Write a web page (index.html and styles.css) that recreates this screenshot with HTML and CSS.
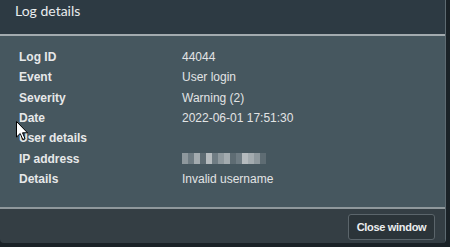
FILE: index.html
```html
<!DOCTYPE html>
<html>
<head>
<meta charset="utf-8">
<link rel="stylesheet" href="styles.css">
</head>
<body>
<div class="modal">
  <div class="modal-header">Log details</div>
  <div class="modal-body">
    <div class="row"><span class="label">Log ID</span><span class="value">44044</span></div>
    <div class="row"><span class="label">Event</span><span class="value">User login</span></div>
    <div class="row"><span class="label">Severity</span><span class="value">Warning (2)</span></div>
    <div class="row"><span class="label">Date</span><span class="value">2022-06-01 17:51:30</span></div>
    <div class="row"><span class="label">User details</span><span class="value"></span></div>
    <div class="row"><span class="label">IP address</span><span class="value blur"><i class="b1"></i><i class="b2"></i><i class="b3"></i><i class="b4"></i><i class="b5"></i><i class="b2"></i><i class="b1"></i><i class="b3"></i><i class="b4"></i><i class="b2"></i><i class="b5"></i><i class="b3"></i><i class="b1"></i><i class="b4"></i></span></div>
    <div class="row"><span class="label">Details</span><span class="value">Invalid username</span></div>
  </div>
  <div class="modal-footer">
    <button class="btn">Close window</button>
  </div>
</div>
<svg class="cursor" width="13" height="20" viewBox="0 0 13 20">
  <path d="M0.5 0.5 L0.5 16 L4.2 12.5 L6.8 18.5 L9 17.6 L6.5 11.8 L11.5 11.8 Z" fill="#fff" stroke="#000" stroke-width="1"/>
</svg>
</body>
</html>
```
FILE: styles.css
```css
html, body {
  margin: 0;
  padding: 0;
}
body {
  width: 450px;
  height: 247px;
  background: #1a2227;
  overflow: hidden;
  position: relative;
  font-family: "Liberation Sans", Arial, sans-serif;
}
.modal {
  width: 445px;
  height: 243px;
  border-right: 1px solid #5d6a71;
  border-bottom-right-radius: 4px;
  border-bottom-left-radius: 4px;
  overflow: hidden;
  display: flex;
  flex-direction: column;
}
.modal-header {
  height: 34px;
  background: #2d3a43;
  border-bottom: 2px solid #a3abaf;
  box-sizing: content-box;
  padding-left: 15px;
  font-family: "Lato", "Open Sans", sans-serif;
  font-size: 14px;
  color: #e9ecee;
  line-height: 22px;
  flex: 0 0 auto;
}
.modal-body {
  background: #46575f;
  padding: 11px 0 0 19px;
  flex: 0 0 171px;
  box-sizing: border-box;
}
.row {
  display: flex;
  height: 20.33px;
  align-items: center;
  font-size: 12px;
  color: #e4e6e7;
}
.label {
  width: 163px;
  font-weight: bold;
  color: #e6e8e9;
}
.value {
  color: #e2e4e5;
}
.blur {
  display: flex;
  height: 11px;
}
.blur i {
  display: block;
  width: 6px;
  height: 11px;
}
.b1 { background: #8e989d; }
.b2 { background: #6f7c83; }
.b3 { background: #a3abaf; }
.b4 { background: #5e6c73; }
.b5 { background: #b5bbbe; }
.modal-footer {
  flex: 1;
  background: #343e44;
  border-top: 2px solid #8f989c;
  display: flex;
  justify-content: flex-end;
  align-items: center;
  padding-right: 10px;
}
.btn {
  height: 26px;
  width: 87px;
  background: #2b3439;
  border: 1px solid #5b656b;
  border-radius: 3px;
  color: #eceeef;
  font-family: "Liberation Sans", Arial, sans-serif;
  font-weight: bold;
  font-size: 11px;
  letter-spacing: -0.3px;
  padding: 0;
  margin-top: 1px;
}
.cursor {
  position: absolute;
  left: 16px;
  top: 121px;
}
```
